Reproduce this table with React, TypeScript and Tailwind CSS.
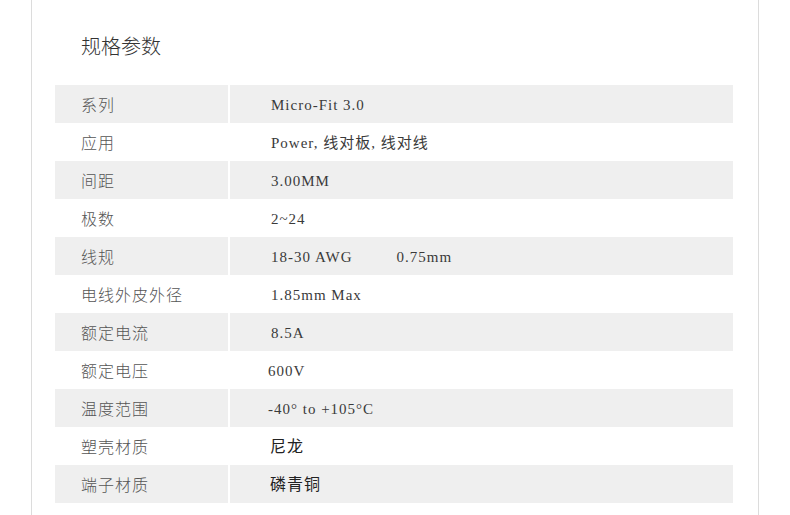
type Spec = {
  label: string
  value: React.ReactNode
  shift?: string
  cjk?: boolean
}

const specs: Spec[] = [
  { label: '系列', value: 'Micro-Fit 3.0' },
  { label: '应用', value: 'Power, 线对板, 线对线' },
  { label: '间距', value: '3.00MM' },
  { label: '极数', value: '2~24' },
  {
    label: '线规',
    value: (
      <>
        <span>18-30 AWG</span>
        <span className="ml-[44px]">0.75mm</span>
      </>
    ),
  },
  { label: '电线外皮外径', value: '1.85mm Max' },
  { label: '额定电流', value: '8.5A' },
  { label: '额定电压', value: '600V', shift: 'pl-[38px]' },
  { label: '温度范围', value: '-40° to +105°C', shift: 'pl-[38px]' },
  { label: '塑壳材质', value: '尼龙', cjk: true, shift: 'pl-[40px]' },
  { label: '端子材质', value: '磷青铜', cjk: true, shift: 'pl-[40px]' },
]

export default function App() {
  return (
    <div className="w-[790px] h-[515px] bg-white overflow-hidden">
      <div className="ml-[31px] w-[728px] h-full border-x border-[#dcdcdc] pl-[23px] pr-[25px] pt-[33px]">
        <h2 className="text-[20px] leading-[26px] text-[#333] pl-[26px] font-['Noto_Sans_CJK_SC',sans-serif] font-light">
          规格参数
        </h2>

        <div className="mt-[26px] flex flex-col">
          {specs.map((s, i) => {
            const bg = i % 2 === 0 ? 'bg-[#efefef]' : 'bg-white'
            return (
              <div key={s.label} className="grid grid-cols-[173px_1fr] gap-x-[2px] h-[38px]">
                <div
                  className={`${bg} flex items-center pl-[26px] text-[16px] tracking-[1px] text-[#555] font-['Noto_Sans_CJK_SC',sans-serif] font-light`}
                >
                  {s.label}
                </div>
                <div
                  className={`${bg} flex items-center ${s.shift ?? 'pl-[41px]'} ${
                    s.cjk
                      ? "pb-[3px] text-[16px] tracking-[1px] text-[#222] font-['Noto_Sans_CJK_SC',sans-serif]"
                      : "pt-[3px] text-[15px] tracking-[1px] text-[#3a3a3a] font-['Liberation_Serif','Noto_Sans_CJK_SC',serif]"
                  }`}
                >
                  {s.value}
                </div>
              </div>
            )
          })}
        </div>
      </div>
    </div>
  )
}
